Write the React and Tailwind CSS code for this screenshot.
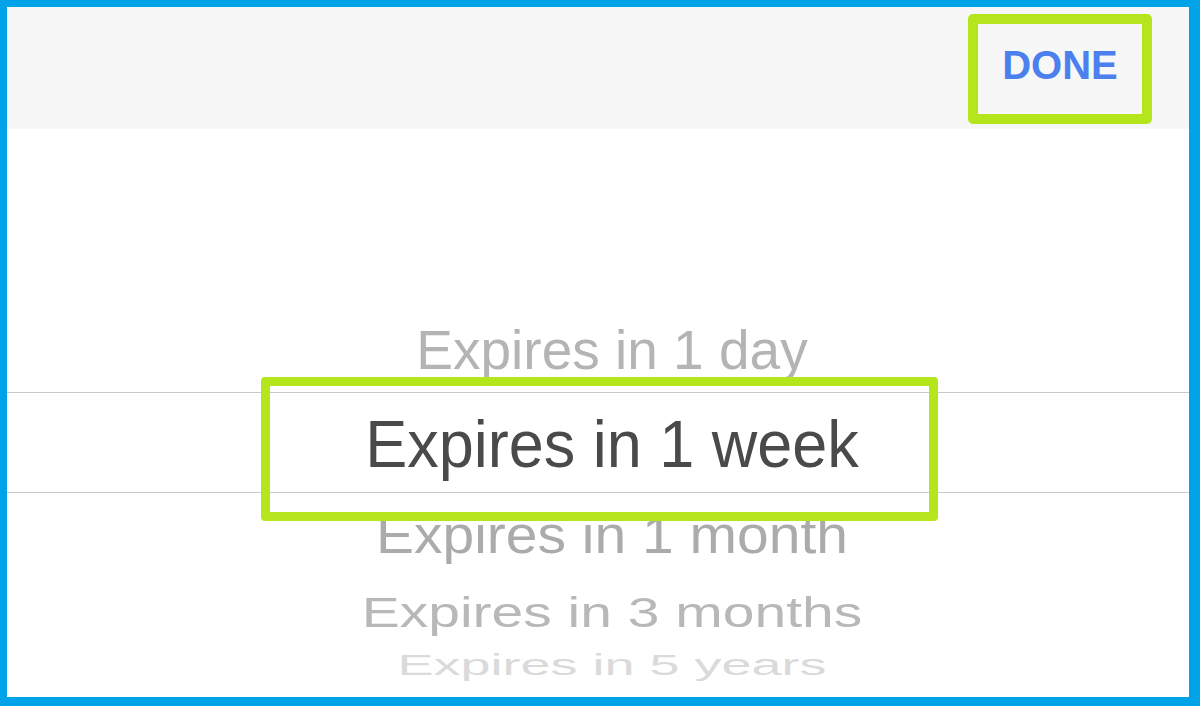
export default function App() {
  const font = { fontFamily: '"Liberation Sans", Arial, sans-serif' };
  return (
    <div
      className="relative w-[1200px] h-[706px] box-border border-t-[7px] border-l-[7px] border-r-[11px] border-b-[9px] border-[#00a2e8] bg-white flex flex-col overflow-hidden"
      style={font}
    >
      {/* Top bar */}
      <div className="h-[122px] shrink-0 bg-[#f7f7f7] flex justify-end items-start pr-[37px] pt-[7px]">
        <div className="w-[184px] h-[110px] box-border border-[10px] border-[#b5e61d] rounded-[5px] flex items-center justify-center pb-[9px]">
          <span className="text-[40px] leading-none font-bold text-[#4b80ee]">DONE</span>
        </div>
      </div>

      {/* Picker */}
      <div className="flex-1 flex flex-col items-stretch pl-[28px] overflow-hidden">
        <div className="mt-[194px] h-[55px] text-[55px] leading-[55px] text-[#b4b4b4] text-center whitespace-nowrap">
          Expires in 1 day
        </div>
        <div className="mt-[14px] -ml-[28px] h-px bg-[#c9c9c9]" />
        <div className="h-[99px] flex justify-center">
          <div className="mt-[21px] h-[63px] text-[63px] leading-[63px] text-[#4a4a4a] whitespace-nowrap scale-y-[1.07] origin-[50%_85%]">
            Expires in 1 week
          </div>
        </div>
        <div className="-ml-[28px] h-px bg-[#c9c9c9]" />
        <div className="mt-[12px] h-[57px] flex justify-center">
          <div className="text-[57px] leading-[57px] text-[#ababab] whitespace-nowrap scale-y-[0.92] origin-[50%_85%]">
            Expires in 1 month
          </div>
        </div>
        <div className="mt-[17px] h-[57px] flex justify-center">
          <div className="text-[57px] leading-[57px] text-[#b8b8b8] whitespace-nowrap scale-y-[0.73] origin-[50%_85%]">
            Expires in 3 months
          </div>
        </div>
        <div className="-mt-[7px] h-[54px] flex justify-center">
          <div className="text-[54px] leading-[54px] text-[#dadada] whitespace-nowrap scale-y-[0.56] origin-[50%_85%]">
            Expires in 5 years
          </div>
        </div>
      </div>

      {/* Annotation highlight */}
      <div className="absolute left-[254px] top-[370px] w-[677px] h-[144px] box-border border-[9px] border-[#b5e61d] rounded-[4px] pointer-events-none" />
    </div>
  );
}
